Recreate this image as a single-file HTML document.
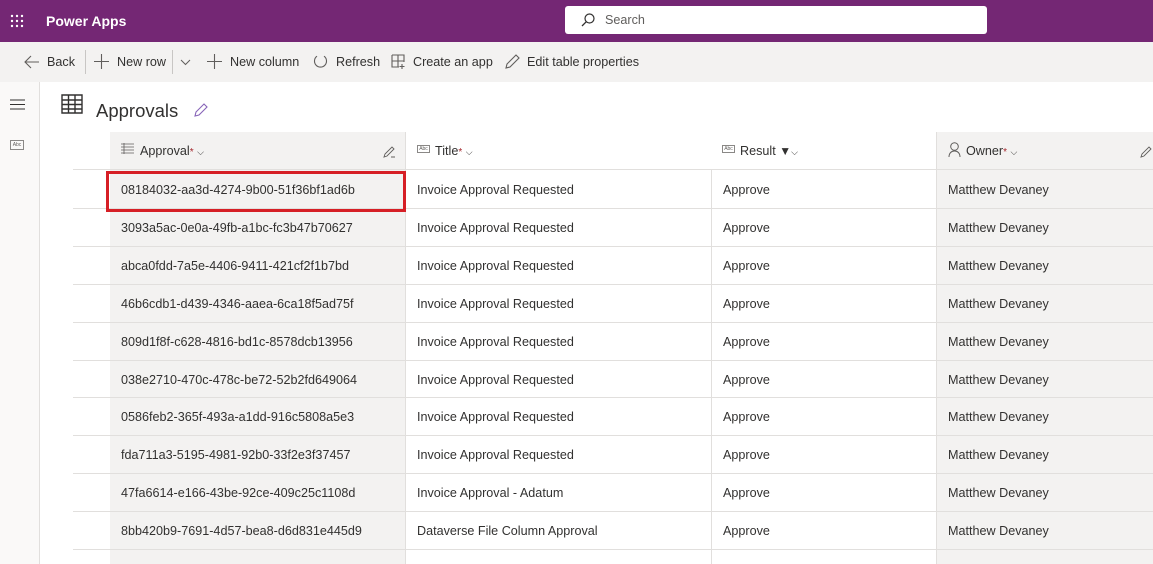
<!DOCTYPE html>
<html><head><style>
*{box-sizing:border-box;margin:0;padding:0}
body{width:1153px;height:564px;overflow:hidden;font-family:"Liberation Sans",sans-serif;background:#fff;position:relative;color:#323130}
.abs{position:absolute}
.top{left:0;top:0;width:1153px;height:42px;background:#742774}
.tb{left:0;top:42px;width:1153px;height:40px;background:#f3f2f1;font-size:12.6px;color:#323130}
.tb span{position:absolute;top:13px}
.rail{left:0;top:82px;width:40px;height:482px;background:#faf9f8;border-right:1px solid #e1dfdd}
.cell{position:absolute;font-size:12.6px;white-space:nowrap}
</style></head><body>
<div class="abs top">
 <svg class="abs" style="left:10px;top:14px" width="14" height="14"><g fill="#fff"><circle cx="2" cy="2" r="1.2"/><circle cx="7" cy="2" r="1.2"/><circle cx="12" cy="2" r="1.2"/><circle cx="2" cy="7" r="1.2"/><circle cx="7" cy="7" r="1.2"/><circle cx="12" cy="7" r="1.2"/><circle cx="2" cy="12" r="1.2"/><circle cx="7" cy="12" r="1.2"/><circle cx="12" cy="12" r="1.2"/></g></svg>
 <div class="abs" style="left:46px;top:13px;color:#fff;font-weight:bold;font-size:14px">Power Apps</div>
 <div class="abs" style="left:565px;top:6px;width:422px;height:28px;background:#fff;border-radius:3px">
  <svg class="abs" style="left:16px;top:7px" width="14" height="14"><circle cx="8.5" cy="5.5" r="4.5" fill="none" stroke="#323130" stroke-width="1.2"/><path d="M5.3 8.7L1 13" stroke="#323130" stroke-width="1.3"/></svg>
  <span class="abs" style="left:40px;top:7px;font-size:12.6px;color:#605e5c">Search</span>
 </div>
</div>
<div class="abs tb">
 <svg class="abs" style="left:24px;top:13px" width="16" height="14"><path d="M15 7H1M7 1L1 7l6 6" fill="none" stroke="#605e5c" stroke-width="1.1"/></svg>
 <span style="left:47px">Back</span>
 <div class="abs" style="left:85px;top:8px;width:1px;height:24px;background:#c8c6c4"></div>
 <svg class="abs" style="left:94px;top:12px" width="15" height="15"><path d="M7.5 0v15M0 7.5h15" stroke="#605e5c" stroke-width="1.1"/></svg>
 <span style="left:117px">New row</span>
 <div class="abs" style="left:172px;top:8px;width:1px;height:24px;background:#c8c6c4"></div>
 <svg class="abs" style="left:180px;top:17px" width="11" height="7"><path d="M1 1l4.5 4.5L10 1" fill="none" stroke="#605e5c"/></svg>
 <svg class="abs" style="left:207px;top:12px" width="15" height="15"><path d="M7.5 0v15M0 7.5h15" stroke="#605e5c" stroke-width="1.1"/></svg>
 <span style="left:230px">New column</span>
 <svg class="abs" style="left:313px;top:12px" width="15" height="15"><path d="M4 2.2A6 6 0 1 0 11 2.2" fill="none" stroke="#605e5c" stroke-width="1.1"/></svg>
 <span style="left:336px">Refresh</span>
 <svg class="abs" style="left:391px;top:12px" width="15" height="15"><path d="M1 1h12v7M1 1v12h7M1 7h12M7 1v12M11 10v5M8.5 12.5h5" fill="none" stroke="#605e5c" stroke-width="1.1"/></svg>
 <span style="left:413px">Create an app</span>
 <svg class="abs" style="left:505px;top:12px" width="15" height="15"><path d="M1 14l1-4L11 1l3 3-9 9z" fill="none" stroke="#605e5c" stroke-width="1.1"/></svg>
 <span style="left:527px">Edit table properties</span>
</div>
<div class="abs rail">
 <svg class="abs" style="left:10px;top:17px" width="15" height="11"><path d="M0 1h15M0 5.5h15M0 10h15" stroke="#323130" stroke-width="1.1"/></svg>
 <div class="abs" style="left:10px;top:58px;width:14px;height:10px;border:1px solid #8a8886;font-size:5px;color:#605e5c;line-height:8px;text-align:center">Abc</div>
</div>
<svg class="abs" style="left:61px;top:94px" width="22" height="20"><path d="M1 1h20v18H1zM1 6h20M1 10.5h20M1 15h20M7.5 1v18M14 1v18" fill="none" stroke="#323130" stroke-width="1.4"/></svg>
<div class="abs" style="left:96px;top:100px;font-size:18.5px;color:#323130">Approvals</div>
<svg class="abs" style="left:194px;top:103px" width="14" height="14"><path d="M1 13l1-4L10 1l3 3-8 8z" fill="none" stroke="#8764b8" stroke-width="1.1"/></svg>

<div class="abs" style="left:110px;top:132px;width:295px;height:38px;background:#f3f2f1"></div>
<div class="abs" style="left:937px;top:132px;width:216px;height:38px;background:#f3f2f1"></div>
<div class="abs" style="left:110px;top:170px;width:296px;height:394px;background:#f3f2f1"></div>
<div class="abs" style="left:937px;top:170px;width:216px;height:394px;background:#f3f2f1"></div>
<div class="abs" style="left:405px;top:132px;width:1px;height:432px;background:#e1dfdd"></div>
<div class="abs" style="left:711px;top:170px;width:1px;height:394px;background:#e1dfdd"></div>
<div class="abs" style="left:936px;top:132px;width:1px;height:432px;background:#e1dfdd"></div>
<div class="abs" style="left:73px;top:169px;width:1080px;height:1px;background:#e1dfdd"></div>

<svg class="abs" style="left:121px;top:143px" width="13" height="11"><path d="M0 1h13M0 4h13M0 7h13M0 10h13M3 0v11" stroke="#605e5c" stroke-width=".8"/></svg>
<div class="cell" style="left:140px;top:144px">Approval<span style="color:#a4262c;font-size:10px">*</span> <span style="font-size:9px">⌵</span></div>
<svg class="abs" style="left:383px;top:145px" width="13" height="13"><path d="M1 12l1-3L9 2l2 2-7 7zM8 12h4" fill="none" stroke="#605e5c" stroke-width=".9"/></svg>
<div class="abs" style="left:417px;top:145px;width:13px;height:8px;border:1px solid #8a8886;font-size:5px;line-height:6px;color:#605e5c;text-align:center">Abc</div>
<div class="cell" style="left:435px;top:144px">Title<span style="color:#a4262c;font-size:10px">*</span> <span style="font-size:9px">⌵</span></div>
<div class="abs" style="left:722px;top:145px;width:13px;height:8px;border:1px solid #8a8886;font-size:5px;line-height:6px;color:#605e5c;text-align:center">Abc</div>
<div class="cell" style="left:740px;top:144px">Result <span style="font-size:12px">▼</span><span style="font-size:9px">⌵</span></div>
<svg class="abs" style="left:948px;top:142px" width="13" height="15"><circle cx="6.5" cy="4.5" r="3.8" fill="none" stroke="#605e5c"/><path d="M1 15c0-4 2.5-6 5.5-6s5.5 2 5.5 6" fill="none" stroke="#605e5c"/></svg>
<div class="cell" style="left:966px;top:144px">Owner<span style="color:#a4262c;font-size:10px">*</span> <span style="font-size:9px">⌵</span></div>
<svg class="abs" style="left:1140px;top:145px" width="13" height="13"><path d="M1 12l1-3L9 2l2 2-7 7z" fill="none" stroke="#605e5c" stroke-width=".9"/></svg>

<div id="rows"></div>
<div class="abs" style="left:106px;top:171px;width:300px;height:41px;border:3px solid #d61f26"></div>
<script>
var ids=["08184032-aa3d-4274-9b00-51f36bf1ad6b","3093a5ac-0e0a-49fb-a1bc-fc3b47b70627","abca0fdd-7a5e-4406-9411-421cf2f1b7bd","46b6cdb1-d439-4346-aaea-6ca18f5ad75f","809d1f8f-c628-4816-bd1c-8578dcb13956","038e2710-470c-478c-be72-52b2fd649064","0586feb2-365f-493a-a1dd-916c5808a5e3","fda711a3-5195-4981-92b0-33f2e3f37457","47fa6614-e166-43be-92ce-409c25c1108d","8bb420b9-7691-4d57-bea8-d6d831e445d9"];
var t=["Invoice Approval Requested","Invoice Approval Requested","Invoice Approval Requested","Invoice Approval Requested","Invoice Approval Requested","Invoice Approval Requested","Invoice Approval Requested","Invoice Approval Requested","Invoice Approval - Adatum","Dataverse File Column Approval"];
var h="";
for(var i=0;i<10;i++){var y=170+i*37.9;
h+='<div class="abs" style="left:73px;top:'+(y+37.9).toFixed(0)+'px;width:1080px;height:1px;background:#e1dfdd"></div>';
var ty=(y+13).toFixed(0);
h+='<div class="cell" style="left:121px;top:'+ty+'px">'+ids[i]+'</div><div class="cell" style="left:417px;top:'+ty+'px">'+t[i]+'</div><div class="cell" style="left:723px;top:'+ty+'px">Approve</div><div class="cell" style="left:948px;top:'+ty+'px">Matthew Devaney</div>';}
document.getElementById("rows").innerHTML=h;
</script>
</body></html>
